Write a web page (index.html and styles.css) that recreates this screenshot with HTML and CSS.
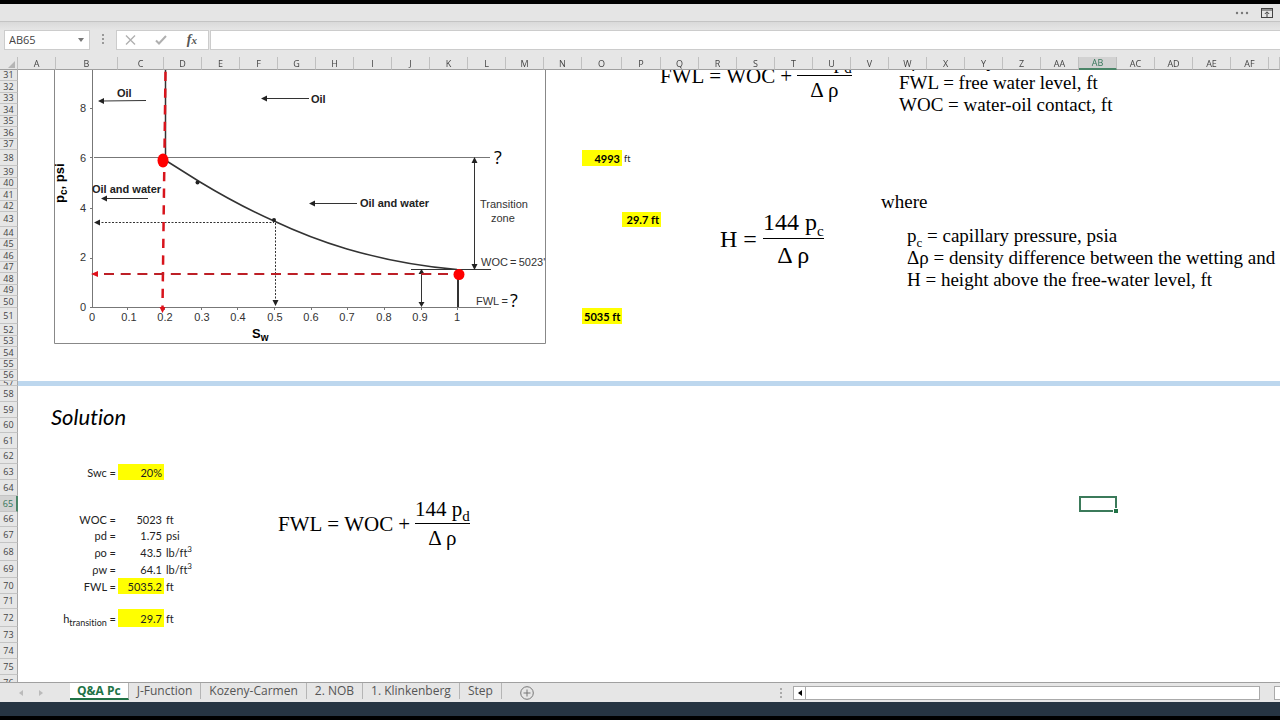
FILE: index.html
```html
<!DOCTYPE html>
<html lang="en">

<head>
    <meta charset="UTF-8">
    <meta name="viewport" content="width=device-width, initial-scale=1.0">
    <title>Q&amp;A Pc</title>
    <link rel="stylesheet" href="styles.css">
</head>

<body>
    <div class="ribbon">
        <button class="icon-btn" aria-label="More">
            <svg width="14" height="4" viewBox="0 0 14 4" fill="#777"><circle cx="2" cy="2" r="1.2"/><circle cx="7" cy="2" r="1.2"/><circle cx="12" cy="2" r="1.2"/></svg>
        </button>
        <button class="icon-btn" aria-label="Ribbon display options">
            <svg width="12" height="10" viewBox="0 0 12 10" fill="none" stroke="#444"><rect x=".5" y=".5" width="11" height="9"/><path d="M1 2h10M6 9V4M3.8 6L6 3.8 8.2 6"/></svg>
        </button>
    </div>
    <div class="formula-bar">
        <div class="name-box">
            <input type="text" value="AB65" aria-label="Name box">
            <svg width="6" height="4" viewBox="0 0 6 4" fill="#777"><path d="M0 0h6L3 4z"/></svg>
        </div>
        <svg class="grip" width="3" height="11" viewBox="0 0 3 11" fill="#999"><path d="M0 0h2v2H0zM0 4h2v2H0zM0 8h2v2H0z"/></svg>
        <div class="formula-buttons">
            <button class="icon-btn" aria-label="Cancel">
                <svg width="11" height="10" viewBox="0 0 11 10" fill="none" stroke="#b0b0b0" stroke-width="1.4"><path d="M1 .5l9 9M10 .5l-9 9"/></svg>
            </button>
            <button class="icon-btn" aria-label="Enter">
                <svg width="12" height="10" viewBox="0 0 12 10" fill="none" stroke="#b0b0b0" stroke-width="2"><path d="M1 5.5L4 8.5 11 1"/></svg>
            </button>
            <button class="icon-btn fx" aria-label="Insert function">f<small>x</small></button>
        </div>
        <input class="formula-input" type="text" aria-label="Formula">
    </div>

    <main class="sheet">
        <table>
            <colgroup>
                <col class="w18"><col class="w38"><col class="w62"><col class="w46">
                <col class="w38" span="11">
                <col class="w40"><col class="w39">
                <col class="w38" span="16">
                <col>
            </colgroup>
            <thead>
                <tr>
                    <th class="corner"><svg width="7" height="7" viewBox="0 0 7 7" fill="#b5b5b5"><path d="M7 0v7H0z"/></svg></th>
                    <th>A</th><th>B</th><th>C</th><th>D</th><th>E</th><th>F</th><th>G</th><th>H</th><th>I</th><th>J</th><th>K</th><th>L</th><th>M</th><th>N</th><th>O</th><th>P</th><th>Q</th><th>R</th><th>S</th><th>T</th><th>U</th><th>V</th><th>W</th><th>X</th><th>Y</th><th>Z</th><th>AA</th><th class="active">AB</th><th>AC</th><th>AD</th><th>AE</th><th>AF</th><th></th>
                </tr>
            </thead>
            <tbody>
                <tr class="h11"><th>31</th></tr>
                <tr class="h12"><th>32</th></tr>
                <tr class="h11"><th>33</th></tr>
                <tr class="h12"><th>34</th></tr>
                <tr class="h11"><th>35</th></tr>
                <tr class="h12"><th>36</th></tr>
                <tr class="h11"><th>37</th></tr>
                <tr class="h16"><th>38</th><td colspan="14"></td><td class="num yellow bold">4993</td><td class="small">ft</td></tr>
                <tr class="h12"><th>39</th></tr>
                <tr class="h11"><th>40</th></tr>
                <tr class="h12"><th>41</th></tr>
                <tr class="h11"><th>42</th></tr>
                <tr class="h15"><th>43</th><td colspan="15"></td><td class="num yellow bold">29.7 ft</td></tr>
                <tr class="h12"><th>44</th></tr>
                <tr class="h11"><th>45</th></tr>
                <tr class="h12"><th>46</th></tr>
                <tr class="h11"><th>47</th></tr>
                <tr class="h12"><th>48</th></tr>
                <tr class="h11"><th>49</th></tr>
                <tr class="h12"><th>50</th></tr>
                <tr class="h16"><th>51</th><td colspan="14"></td><td class="num yellow bold">5035 ft</td></tr>
                <tr class="h12"><th>52</th></tr>
                <tr class="h11"><th>53</th></tr>
                <tr class="h12"><th>54</th></tr>
                <tr class="h11"><th>55</th></tr>
                <tr class="h11"><th>56</th></tr>
                <tr class="h5"><th><span>57</span></th><td class="divider" colspan="33"></td></tr>
                <tr class="h16"><th>58</th></tr>
                <tr class="h16"><th>59</th></tr>
                <tr class="h15"><th>60</th></tr>
                <tr class="h16"><th>61</th></tr>
                <tr class="h15"><th>62</th></tr>
                <tr class="h16"><th>63</th><td></td><td class="num">Swc =</td><td class="num yellow">20%</td></tr>
                <tr class="h16"><th>64</th></tr>
                <tr class="h16"><th class="active">65</th><td colspan="27"></td><td class="selected"></td></tr>
                <tr class="h15"><th>66</th><td></td><td class="num">WOC =</td><td class="num">5023</td><td>ft</td></tr>
                <tr class="h16"><th>67</th><td></td><td class="num">pd =</td><td class="num">1.75</td><td>psi</td></tr>
                <tr class="h18"><th>68</th><td></td><td class="num">ρo =</td><td class="num">43.5</td><td>lb/ft<sup>3</sup></td></tr>
                <tr class="h17"><th>69</th><td></td><td class="num">ρw =</td><td class="num">64.1</td><td>lb/ft<sup>3</sup></td></tr>
                <tr class="h16"><th>70</th><td></td><td class="num">FWL =</td><td class="num yellow">5035.2</td><td>ft</td></tr>
                <tr class="h15"><th>71</th></tr>
                <tr class="h18"><th>72</th><td></td><td class="num">h<sub>transition</sub> =</td><td class="num yellow">29.7</td><td>ft</td></tr>
                <tr class="h16"><th>73</th></tr>
                <tr class="h16"><th>74</th></tr>
                <tr class="h16"><th>75</th></tr>
                <tr class="h16"><th>76</th></tr>
            </tbody>
        </table>

        <!-- capillary pressure chart -->
        <svg class="chart" width="492" height="274" viewBox="54 70 492 274">
            <rect x="54" y="60" width="492" height="284" fill="#fff"/>
            <path d="M54.5 70v273.500h491V70" fill="none" stroke="#888"/>
            <g fill="none" stroke="#777">
                <path d="M92.500 70v237M90 307.500h401"/>
                <path d="M90 108.500h3M90 157.500h3M90 208.500h3M90 258.500h3M127.500 307v3M164.500 307v3M201.500 307v3M237.500 307v3M274.500 307v3M311.500 307v3M347.500 307v3M384.500 307v3M421.500 307v3M457.500 307v3"/>
                <path d="M94 157.500h396"/>
            </g>
            <g fill="none" stroke="#333">
                <path d="M411 269.500h80M421.500 272v32M474.500 160v106"/>
                <path d="M102 101l44-.5M265 98.500h44M105 198.500h43M313 203.500h44"/>
                <path d="M98 222.500h176M275.500 223v80" stroke-dasharray="2 1.500"/>
                <path d="M458 275v32" stroke-width="2"/>
                <path d="M165.500 70v88" stroke-width="1.500"/>
                <path d="M165 160L200 182Q238 205 274 221 310 238 347 249 402 265 457 269.500" stroke-width="1.500"/>
            </g>
            <g fill="#222">
                <path d="M98 101l6-3v6zM261 98.500l6-3v6zM101 198.500l6-3v6zM309 203.500l6-3v6zM94 222.500l6-3v6z"/>
                <path d="M275.500 306l-3-6h6zM421.500 307l-3-5h6zM421.500 269l-3 5h6zM474.500 157l-3 6h6zM474.500 270l-3-6h6z"/>
                <circle cx="197.500" cy="182.500" r="2"/><circle cx="274" cy="220" r="2"/>
            </g>
            <g fill="none" stroke="#d8141c">
                <path d="M165.500 71.700L162.500 308" stroke-width="2.500" stroke-dasharray="9.300 7.400"/>
                <path d="M448 274H97" stroke="#bd1f26" stroke-width="2" stroke-dasharray="10 6.700"/>
            </g>
            <path d="M91 274l7-3v6zM162.500 313l-3-6h6z" fill="#e0101a"/>
            <ellipse cx="163" cy="160.500" rx="5.500" ry="7" fill="#f00"/>
            <circle cx="459" cy="274.500" r="5.500" fill="#f00"/>
            <g class="chart-num">
                <text x="86" y="112" text-anchor="end">8</text><text x="86" y="162" text-anchor="end">6</text><text x="86" y="212" text-anchor="end">4</text><text x="86" y="261" text-anchor="end">2</text><text x="86" y="311" text-anchor="end">0</text>
            </g>
            <g class="chart-num" text-anchor="middle">
                <text x="92" y="321">0</text><text x="129" y="321">0.1</text><text x="165" y="321">0.2</text><text x="202" y="321">0.3</text><text x="238" y="321">0.4</text><text x="275" y="321">0.5</text><text x="311" y="321">0.6</text><text x="347" y="321">0.7</text><text x="384" y="321">0.8</text><text x="420" y="321">0.9</text><text x="457" y="321">1</text>
            </g>
            <g class="chart-bold">
                <text x="117" y="97">Oil</text>
                <text x="311" y="103">Oil</text>
                <text x="92" y="193">Oil and water</text>
                <text x="360" y="207">Oil and water</text>
            </g>
            <g class="chart-num">
                <text x="480" y="208">Transition</text>
                <text x="491" y="222">zone</text>
                <text x="481" y="266">WOC&#8201;=&#8201;5023'</text>
                <text x="476" y="305">FWL&#8201;=</text>
            </g>
            <g class="question"><text x="494" y="164">?</text><text x="510" y="307">?</text></g>
            <g class="axis-title">
                <text x="252" y="338">S<tspan class="axis-sub" dy="3">w</tspan></text>
                <text transform="translate(64 203) rotate(-90)">p<tspan class="axis-sub" dy="3">c</tspan><tspan dy="-3">, psi</tspan></text>
            </g>
        </svg>

        <div class="equation fwl-top">FWL<i>=</i>WOC<i>+</i><span class="fraction"><span>144 p<sub>d</sub></span><span>Δ ρ</span></span></div>
        <div class="equation height-eq">H<i>=</i><span class="fraction"><span>144 p<sub>c</sub></span><span>Δ ρ</span></span></div>
        <div class="equation fwl-solution">FWL<i>=</i>WOC<i>+</i><span class="fraction"><span>144 p<sub>d</sub></span><span>Δ ρ</span></span></div>
        <div class="notes notes-top">
            <p>Δρ = density difference</p>
            <p>FWL = free water level, ft</p>
            <p>WOC = water-oil contact, ft</p>
        </div>
        <div class="notes notes-where">
            <p>where</p>
            <div class="terms">
                <p>p<sub>c</sub> = capillary pressure, psia</p>
                <p>Δρ = density difference between the wetting and non-wetting</p>
                <p>H = height above the free-water level, ft</p>
            </div>
        </div>
        <h2 class="solution">Solution</h2>
    </main>

    <footer class="tab-bar">
        <div class="tab-nav">
            <button class="icon-btn" aria-label="Previous sheet"><svg width="4" height="6" viewBox="0 0 4 6" fill="#bbb"><path d="M4 0v6L0 3z"/></svg></button>
            <button class="icon-btn" aria-label="Next sheet"><svg width="4" height="6" viewBox="0 0 4 6" fill="#bbb"><path d="M0 0v6l4-3z"/></svg></button>
        </div>
        <nav class="tabs">
            <button class="tab current">Q&amp;A Pc</button>
            <button class="tab">J-Function</button>
            <button class="tab">Kozeny-Carmen</button>
            <button class="tab">2. NOB</button>
            <button class="tab">1. Klinkenberg</button>
            <button class="tab">Step</button>
        </nav>
        <button class="icon-btn add" aria-label="New sheet">
            <svg width="14" height="14" viewBox="0 0 14 14" fill="none" stroke="#777"><circle cx="7" cy="7" r="6.300"/><path d="M7 3.500v7M3.500 7h7"/></svg>
        </button>
        <div class="scroll">
            <svg class="scroll-grip" width="2" height="10" viewBox="0 0 2 10" fill="#aaa"><path d="M0 0h2v2H0zM0 4h2v2H0zM0 8h2v2H0z"/></svg>
            <button class="scroll-btn" aria-label="Scroll left"><svg width="4" height="6" viewBox="0 0 4 6"><path d="M4 0v6L0 3z"/></svg></button>
            <div class="thumb"></div>
            <button class="scroll-btn right" aria-label="Scroll right"></button>
        </div>
    </footer>
    <div class="status"></div>
</body>

</html>
```
FILE: styles.css
```css
* {
    box-sizing: border-box;
}

body {
    margin: 0;
    height: 100vh;
    display: flex;
    flex-direction: column;
    overflow: hidden;
    border-top: 4px solid #000;
    border-bottom: 4px solid #000;
    background: #e6e6e6;
    font-family: "Open Sans", "Noto Sans", sans-serif;
    font-variant-ligatures: none;
    color: #222;
}

button,
input {
    font: inherit;
    color: inherit;
    border: none;
    padding: 0;
    background: none;
    outline: none;
}

.icon-btn {
    display: flex;
    align-items: center;
    justify-content: center;
}

.ribbon {
    height: 18px;
    flex-shrink: 0;
    display: flex;
    justify-content: flex-end;
    gap: 12px;
    padding-right: 7px;
    background: #e5e5e5;
    border-bottom: 1px solid #c4c4c4;
}

/* formula bar */
.formula-bar {
    height: 35px;
    flex-shrink: 0;
    display: flex;
    align-items: center;
    padding: 0 0 0 4px;
    background: linear-gradient(#dadada, #e6e6e6 8px);
}

.name-box {
    width: 86px;
    height: 20px;
    display: flex;
    align-items: center;
    padding: 0 5px 0 4px;
    background: #fff;
    border: 1px solid #ccc;
    font-size: 11px;
    color: #444;
}

.name-box input {
    flex: 1;
    min-width: 0;
}

.grip {
    margin: 0 11px 0 12px;
}

.formula-buttons {
    width: 93px;
    height: 20px;
    display: flex;
    align-items: center;
    justify-content: space-between;
    padding: 0 11px 0 8px;
    margin-right: 1px;
    background: #fff;
    border: 1px solid #ccc;
}

.fx {
    font: italic bold 14px/16px "Liberation Serif", serif;
    color: #555;
}

.fx small {
    font-size: 11px;
}

.formula-input {
    flex: 1;
    height: 20px;
    background: #fff;
    border: 1px solid #ccc;
    border-right: none;
}

/* grid */
.sheet {
    flex: 1;
    min-height: 0;
    position: relative;
    overflow: hidden;
    background: #fff;
}

table {
    width: 100%;
    table-layout: fixed;
    border-collapse: separate;
    border-spacing: 0;
    font-family: Lato, sans-serif;
    font-size: 11px;
    line-height: 11px;
}

.w18 { width: 18px; }
.w38 { width: 38px; }
.w39 { width: 39px; }
.w40 { width: 40px; }
.w46 { width: 46px; }
.w62 { width: 62px; }

.h5 { height: 5px; }
.h11 { height: 11px; }
.h12 { height: 12px; }
.h15 { height: 15px; }
.h16 { height: 16px; }
.h17 { height: 17px; }
.h18 { height: 18px; }

th {
    padding: 0;
    background: #e6e6e6;
    border-right: 1px solid #a8a8a8;
    border-bottom: 1px solid #c4c4c4;
    font-family: "Open Sans", "Noto Sans", sans-serif;
    font-size: 9px;
    font-weight: normal;
    line-height: 10px;
    color: #444;
}

thead {
    position: sticky;
    top: 0;
    z-index: 2;
}

thead th {
    height: 13px;
    padding-top: 2px;
    line-height: 10px;
    border-right-color: #c0c0c0;
    border-bottom-color: #a0a0a0;
}

thead .corner svg {
    display: block;
    margin: 0 2px 0 auto;
}

thead .active {
    padding-top: 1px;
    background: #d2d2d2;
    border-bottom: 2px solid #4b8568;
    color: #35765a;
}

tbody .active {
    background: #d2d2d2;
    border-right: 2px solid #4b8568;
    color: #35765a;
}

.h5 span {
    display: block;
    height: 4px;
    line-height: 4px;
    overflow: hidden;
}

td {
    padding: 0 2px;
    white-space: nowrap;
}

.num {
    text-align: right;
}

.yellow {
    background: #ff0;
}

.bold {
    font-weight: bold;
    color: #000;
}

.small {
    font-size: 9px;
}

.divider {
    padding: 0;
    background: #bdd7ee;
}

.selected {
    position: relative;
    border: 2px solid #3b7a5a;
}

.selected::after {
    content: '';
    position: absolute;
    right: -3px;
    bottom: -3px;
    width: 4px;
    height: 4px;
    background: #217346;
    border: solid #fff;
    border-width: 1px 0 0 1px;
}

sup,
sub {
    line-height: 0;
}

td sup {
    font-size: 8px;
}

td sub {
    font-size: 9px;
}

/* objects placed over the cells */
.chart {
    position: absolute;
    left: 54px;
    top: 13px;
    font-family: "Liberation Sans", sans-serif;
}

.chart-num {
    font-size: 11px;
    fill: #333;
}

.chart-bold {
    font-size: 11px;
    font-weight: bold;
    fill: #222;
}

.question {
    font-family: "Open Sans", sans-serif;
    font-size: 18px;
}

.axis-title {
    font-size: 13px;
    font-weight: bold;
}

.axis-sub {
    font-size: 10px;
}

.equation {
    position: absolute;
    display: flex;
    align-items: center;
    font-family: "Liberation Serif", serif;
    font-size: 21px;
    line-height: 28px;
    color: #000;
}

.equation i {
    font-style: normal;
    padding: 0 5px;
}

.equation sub {
    font-size: 15px;
}

.fraction {
    display: flex;
    flex-direction: column;
    text-align: center;
}

.fraction span:first-child {
    border-bottom: 1px solid #000;
}

.fwl-top {
    left: 660px;
    top: -10px;
}

.fwl-solution {
    left: 278px;
    top: 438px;
}

.height-eq {
    left: 720px;
    top: 149px;
    font-size: 24px;
    line-height: 32px;
}

.height-eq i {
    padding: 0 6px;
}

.notes {
    position: absolute;
    font-family: "Liberation Serif", serif;
    font-size: 19px;
    line-height: 22px;
    white-space: nowrap;
    color: #000;
}

.notes p {
    margin: 0;
}

.notes sub {
    font-size: 13px;
}

.notes-top {
    left: 899px;
    top: -7px;
}

.notes-where {
    left: 881px;
    top: 134px;
}

.terms {
    padding: 12px 0 0 26px;
}

.solution {
    position: absolute;
    left: 51px;
    top: 346px;
    margin: 0;
    font-family: Lato, sans-serif;
    font-size: 22px;
    font-style: italic;
    font-weight: normal;
    line-height: 28px;
    color: #000;
}

/* sheet tabs */
.tab-bar {
    height: 20px;
    flex-shrink: 0;
    display: flex;
    background: #e6e6e6;
    border-top: 1px solid #a0a0a0;
    font-size: 12px;
}

.tab-nav {
    width: 70px;
    display: flex;
    gap: 16px;
    padding-left: 19px;
}

.tabs {
    display: flex;
    align-items: flex-start;
}

.tab {
    height: 16px;
    padding: 0 8px;
    border-right: 1px solid #b5b5b5;
    line-height: 14px;
    color: #555;
}

.current {
    height: 17px;
    padding: 0 7px;
    background: #fff;
    border-bottom: 2px solid #217346;
    font-weight: bold;
    color: #217346;
}

.add {
    margin-left: 18px;
}

.scroll {
    width: 500px;
    margin-left: auto;
    display: flex;
    align-items: center;
}

.scroll-grip {
    margin-right: 11px;
}

.scroll-btn {
    width: 13px;
    height: 14px;
    display: flex;
    align-items: center;
    justify-content: center;
    background: #fff;
    border: 1px solid #aaa;
}

.scroll-btn.right {
    width: 6px;
    border-right: none;
}

.thumb {
    flex: 1;
    height: 14px;
    margin-right: 14px;
    background: #fff;
    border: 1px solid #aaa;
    border-left: none;
}

.status {
    height: 14px;
    flex-shrink: 0;
    background: #263442;
}
```
